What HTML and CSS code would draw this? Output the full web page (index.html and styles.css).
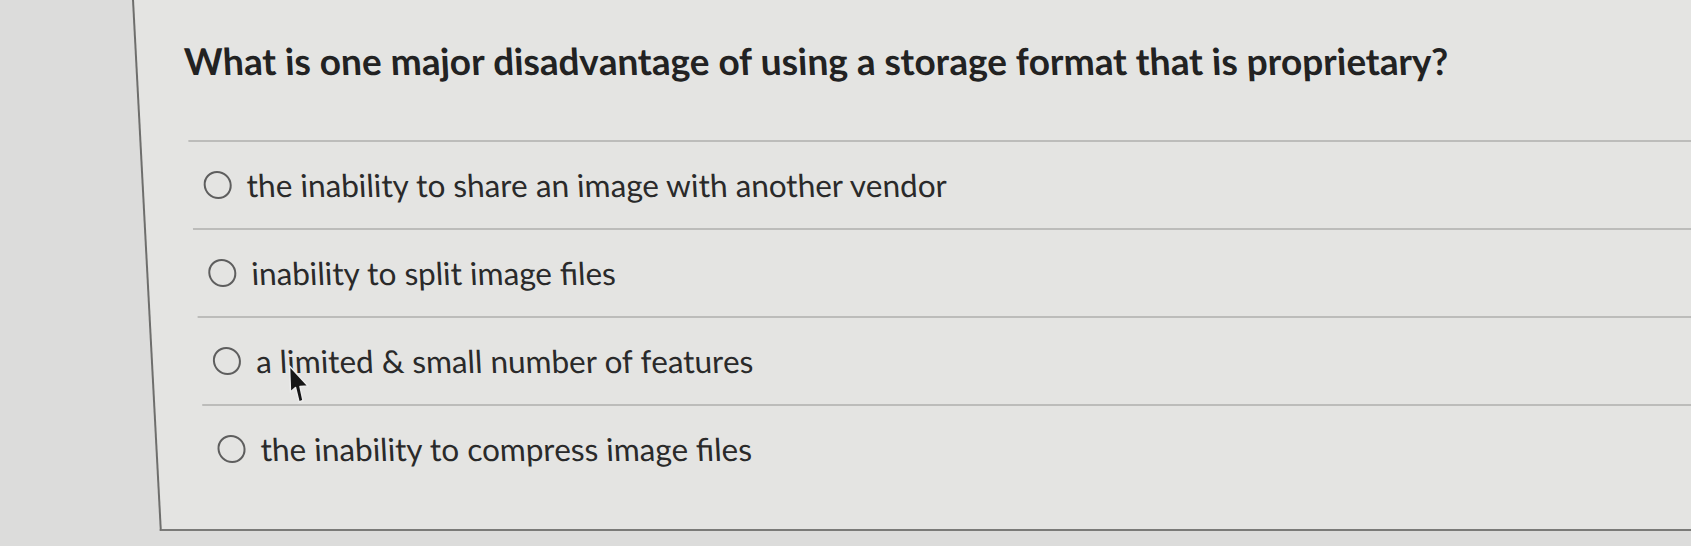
FILE: index.html
```html
<!DOCTYPE html>
<html lang="en">
<head>
<meta charset="utf-8">
<title>Quiz question</title>
<link rel="stylesheet" href="styles.css">
</head>
<body>
<div class="page">
  <div class="card">
    <h1 class="question">What is one major disadvantage of using a storage format that is proprietary?</h1>
    <ul class="answers">
      <li class="answer"><span class="radio"></span><span class="label">the inability to share an image with another vendor</span></li>
      <li class="answer"><span class="radio"></span><span class="label">inability to split image files</span></li>
      <li class="answer"><span class="radio"></span><span class="label">a limited &amp; small number of features</span></li>
      <li class="answer"><span class="radio"></span><span class="label">the inability to compress image files</span></li>
    </ul>
  </div>
  <svg class="cursor" width="22" height="40" viewBox="0 0 22 40" aria-hidden="true">
    <path d="M1.5 1 L2.5 27 L7.5 22.5 L11 37 L15 35.5 L12 21.5 L20 21 Z" fill="#161616" stroke="#ececec" stroke-width="1.5" stroke-linejoin="round"/>
  </svg>
</div>
</body>
</html>
```
FILE: styles.css
```css
html, body {
  margin: 0;
  padding: 0;
}
body {
  width: 1691px;
  height: 546px;
  overflow: hidden;
  background: #dcdcdb;
  font-family: Lato, "Open Sans", "Liberation Sans", sans-serif;
}
.page {
  position: relative;
  width: 1691px;
  height: 546px;
  padding-left: 132px;
  box-sizing: border-box;
  overflow: hidden;
}
.card {
  width: 1700px;
  box-sizing: border-box;
  background: #e4e4e2;
  border-left: 2px solid #6e6e6c;
  border-bottom: 2px solid #7a7a78;
  padding: 39px 0 37px 47px;
  transform: skewX(3deg);
  transform-origin: 0 0;
}
.question {
  margin: 0;
  font-size: 37px;
  line-height: 44px;
  font-weight: 700;
  color: #222222;
  height: 101px;
}
.answers {
  list-style: none;
  margin: 0;
  padding: 0;
}
.answer {
  display: flex;
  align-items: center;
  height: 86px;
  border-top: 2px solid #bcbcba;
  padding-left: 13px;
  gap: 15px;
}
.radio {
  width: 24px;
  height: 24px;
  border: 2px solid #5e5e5e;
  border-radius: 50%;
  flex: none;
}
.label {
  font-size: 31.5px;
  line-height: 38px;
  color: #2a2a2a;
}
.cursor {
  position: absolute;
  left: 288px;
  top: 365px;
}
```
